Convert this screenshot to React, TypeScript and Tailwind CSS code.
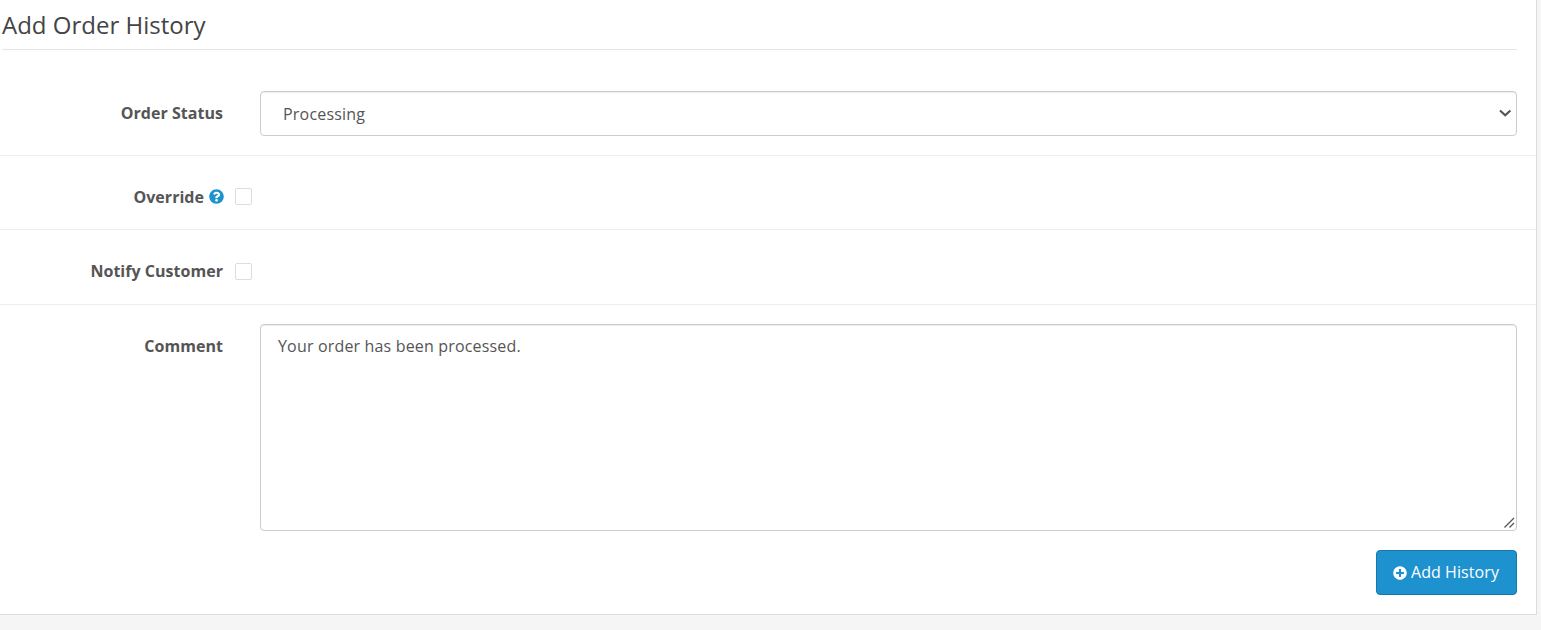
import { FaPlusCircle, FaQuestionCircle } from "react-icons/fa";

const labelClass = "w-[223px] shrink-0 text-right text-[16px] font-bold leading-[24px] tracking-[0.03px] text-[#555]";

function CheckBox() {
  return <input type="checkbox" className="ml-[12px] size-[17px] appearance-none rounded-[2px] border border-[#ddd] bg-white" />;
}

export default function App() {
  return (
    <div className="h-[630px] overflow-hidden bg-[#f5f5f5] font-['Open_Sans',sans-serif]">
      <div className="h-[615px] w-[1537px] border-r border-b border-[#ddd] bg-white">
        <div className="ml-[2px] mr-[19px] h-[50px] border-b border-[#e5e5e5] pt-[7px]">
          <h2 className="text-[24px] leading-[36px] font-normal text-[#444]">Add Order History</h2>
        </div>

        {/* order status */}
        <div className="flex h-[106px] items-start border-b border-[#eee] pt-[41px]">
          <label className={`${labelClass} mt-[10px]`}>Order Status</label>
          <div className="relative ml-[37px] w-[1257px]">
            <select
              defaultValue="processing"
              className="block h-[45px] w-full appearance-none rounded-[4px] border border-[#ccc] bg-white pl-[22px] text-[16px] tracking-[0.2px] text-[#555] shadow-[inset_0_1px_1px_rgba(0,0,0,0.075)]"
            >
              <option value="processing">Processing</option>
              <option value="shipped">Shipped</option>
              <option value="complete">Complete</option>
            </select>
            <svg className="pointer-events-none absolute top-[18px] right-[5px] h-[8px] w-[13px]" viewBox="0 0 13 8" fill="none">
              <path d="M1 1.5 6.2 6.2 11.4 1.5" stroke="#555" strokeWidth="2.2" />
            </svg>
          </div>
        </div>

        {/* override */}
        <div className="flex h-[74px] items-center border-b border-[#eee] pt-[8px]">
          <label className={`${labelClass} flex items-center justify-end gap-[5px]`}>
            Override <FaQuestionCircle className="mr-[-1px] size-[15px] text-[#1e91cf]" />
          </label>
          <CheckBox />
        </div>

        {/* notify */}
        <div className="flex h-[75px] items-center border-b border-[#eee] pt-[8px]">
          <label className={labelClass}>Notify Customer</label>
          <CheckBox />
        </div>

        {/* comment */}
        <div className="flex items-start pt-[19px]">
          <label className={`${labelClass} mt-[10px]`}>Comment</label>
          <div className="relative ml-[37px] w-[1257px]">
            <textarea
              defaultValue="Your order has been processed."
              className="block h-[207px] w-full resize-none rounded-[4px] border border-[#ccc] bg-white px-[17px] py-[9px] text-[16px] leading-[24px] tracking-[0.17px] text-[#555] shadow-[inset_0_1px_1px_rgba(0,0,0,0.075)] outline-none"
            />
            <svg className="pointer-events-none absolute right-[2px] bottom-[3px] size-[11px]" viewBox="0 0 11 11" fill="none">
              <path d="M0.5 10.5 10 1M5.5 10.5 10 6" stroke="#555" strokeWidth="1.3" />
            </svg>
          </div>
        </div>

        <div className="mt-[19px] flex justify-end pr-[19px]">
          <button className="flex h-[45px] w-[141px] items-center justify-center gap-[4px] rounded-[4px] border border-[#1978ab] bg-[#1e91cf] pr-[1px] pb-[2px] text-[16px] tracking-[0.08px] text-white">
            <FaPlusCircle className="mt-[2px] size-[14px]" />
            Add History
          </button>
        </div>
      </div>
    </div>
  );
}
